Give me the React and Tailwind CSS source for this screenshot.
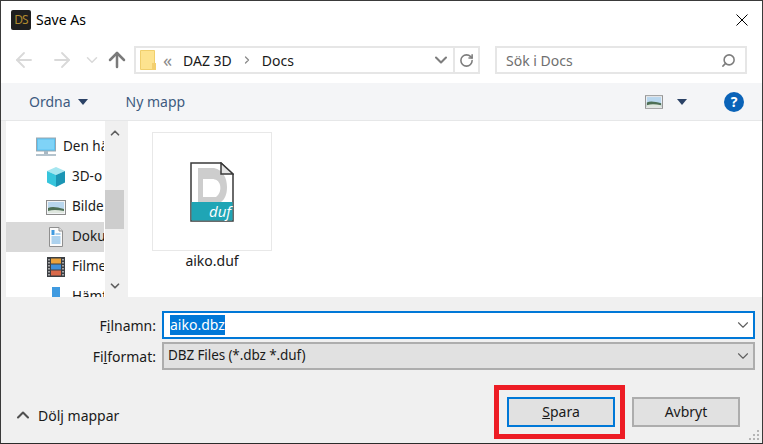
import { ChevronDown, ChevronUp, ChevronRight, ArrowLeft, ArrowRight, ArrowUp, RotateCw, Search } from 'lucide-react';

const PictureIcon = ({ className }) => (
  <svg viewBox="0 0 20 15" className={className}>
    <rect x="0.5" y="0.5" width="19" height="14" fill="#f2f4f6" stroke="#8c8c8c" />
    <rect x="2" y="2" width="16" height="11" fill="#b9d7ee" />
    <path d="M2 8 C6 6 11 7 18 9 V13 H2 Z" fill="#4d6f55" />
    <path d="M2 11 C7 9.5 12 10 18 11 V13 H2 Z" fill="#dfe7df" />
  </svg>
);

const sidebarItems = [
  { label: 'Den hä', indent: 'pl-[30px]', gap: 'gap-[7px]', icon: 'pc' },
  { label: '3D-o', indent: 'pl-[40px]', gap: 'gap-[6px]', icon: 'cube' },
  { label: 'Bilde', indent: 'pl-[40px]', gap: 'gap-[6px]', icon: 'pic' },
  { label: 'Dokument', indent: 'pl-[40px]', gap: 'gap-[6px]', icon: 'doc', active: true },
  { label: 'Filmer', indent: 'pl-[40px]', gap: 'gap-[6px]', icon: 'film' },
  { label: 'Hämtade', indent: 'pl-[40px]', gap: 'gap-[6px]', icon: 'down' },
];

const SidebarIcon = ({ type }) => {
  if (type === 'pc') {
    return (
      <svg viewBox="0 0 20 20" className="h-5 w-5 shrink-0">
        <rect x="0.5" y="1" width="19" height="13" fill="#5cc3f2" stroke="#9aa7b0" />
        <rect x="2" y="2.5" width="16" height="10" fill="#7fd3f7" />
        <rect x="8" y="14" width="4" height="3" fill="#a9b8c2" />
        <rect x="0" y="17" width="20" height="2" fill="#b4c3cd" />
      </svg>
    );
  }
  if (type === 'cube') {
    return (
      <svg viewBox="0 0 20 20" className="h-5 w-5 shrink-0">
        <path d="M10 0 L19 4 L10 8 L1 4 Z" fill="#a5e6f0" />
        <path d="M1 4 L10 8 V20 L1 15.5 Z" fill="#36c5dc" />
        <path d="M19 4 L10 8 V20 L19 15.5 Z" fill="#1b95b4" />
      </svg>
    );
  }
  if (type === 'pic') return <PictureIcon className="h-[15px] w-5 shrink-0" />;
  if (type === 'doc') {
    return (
      <svg viewBox="0 0 20 20" className="h-5 w-5 shrink-0">
        <path d="M3.5 0.5 H13 L16.5 4 V19.5 H3.5 Z" fill="#fbfbfb" stroke="#8f8f8f" />
        <path d="M13 0.5 V4 H16.5" fill="#e2e2e2" stroke="#8f8f8f" />
        <rect x="5.5" y="3" width="3" height="5" fill="#3f9ae0" />
        <path d="M9.5 7 H14.5 M5.5 10 H14.5 M5.5 12 H14.5 M5.5 14 H14.5 M5.5 16 H14.5" stroke="#5fa8e0" strokeWidth="1" />
      </svg>
    );
  }
  if (type === 'film') {
    return (
      <svg viewBox="0 0 20 20" className="h-5 w-5 shrink-0">
        <rect x="1" y="0" width="18" height="20" fill="#3c3f43" />
        <rect x="5" y="1.5" width="10" height="5" fill="#e9a13b" />
        <rect x="5" y="7.5" width="10" height="5" fill="#3f8fd8" />
        <rect x="5" y="13.5" width="10" height="5" fill="#d9694a" />
        <path d="M3 2 V19 M17 2 V19" stroke="#c9c9c9" strokeWidth="1.5" strokeDasharray="1.5 1.5" />
      </svg>
    );
  }
  return (
    <svg viewBox="0 0 20 20" className="h-5 w-5 shrink-0">
      <rect x="6" y="0" width="8" height="12" fill="#3f9ae0" />
      <path d="M3 11 H17 L10 19 Z" fill="#3f9ae0" />
    </svg>
  );
};

const FileIcon = () => (
  <svg viewBox="0 0 44 60" className="h-[60px] w-[44px]">
    <path d="M1 1 H31 L43 12 V59 H1 Z" fill="#ffffff" stroke="#3a3a3a" strokeWidth="1.5" />
    <path fillRule="evenodd" d="M8 6 H24 C33 8 37 16 37 25 C37 32 35 37 31 40 H13 V35 H26 C30 32 31 27 30 23 C29 19 26 17 22 17 H13 V40 H8 Z" fill="#cdcdcd" />
    <path d="M31 1 V12 H43 Z" fill="#e4e4e4" stroke="#3a3a3a" strokeWidth="1.5" />
    <rect x="1.5" y="40" width="41" height="18.5" fill="#1fa5b5" />
    <text x="41" y="55" textAnchor="end" fontFamily="'Open Sans', sans-serif" fontStyle="italic" fontSize="15" fill="#ffffff">duf</text>
  </svg>
);

const ResizeGrip = () => (
  <svg viewBox="0 0 12 12" className="absolute bottom-[2px] right-[2px] h-3 w-3">
    <path d="M9 1 h2 v2 h-2 Z M5 5 h2 v2 h-2 Z M9 5 h2 v2 h-2 Z M1 9 h2 v2 h-2 Z M5 9 h2 v2 h-2 Z M9 9 h2 v2 h-2 Z" fill="#b5b5b5" />
  </svg>
);

const App = () => {
  return (
    <div className="relative flex h-[444px] w-[763px] flex-col overflow-hidden border border-[#3a3a3a] border-b-[#2b2b2b] bg-white font-['Noto_Sans','Open_Sans',sans-serif] text-[14px] leading-none text-[#1a1a1a]">
      {/* title bar */}
      <div className="flex h-[37px] shrink-0 items-center pl-[10px] pr-[14px]">
        <div className="flex h-5 w-5 items-center justify-center rounded-[2px] bg-[#1f1f1f] text-[12px] tracking-[-1px] text-[#b08a2e]">DS</div>
        <span className="ml-[5px] text-[14px] text-black">Save As</span>
        <svg viewBox="0 0 12 12" className="ml-auto h-3 w-3">
          <path d="M0.5 0.5 L11.5 11.5 M11.5 0.5 L0.5 11.5" stroke="#000000" strokeWidth="1" fill="none" />
        </svg>
      </div>

      {/* address row */}
      <div className="flex h-[45px] shrink-0 items-start pt-[8px]">
        <div className="flex h-[28px] w-[133px] shrink-0 items-center pl-[11px]">
          <ArrowLeft className="h-6 w-6 text-[#d9d9d9]" strokeWidth={1.8} />
          <ArrowRight className="ml-[14px] h-6 w-6 text-[#d9d9d9]" strokeWidth={1.8} />
          <ChevronDown className="ml-[9px] h-[18px] w-[18px] text-[#d9d9d9]" strokeWidth={2} />
          <ArrowUp className="ml-[4px] h-6 w-6 text-[#7a7a7a]" strokeWidth={2.5} />
        </div>
        <div className="flex h-[28px] w-[346px] shrink-0 items-center border-2 border-[#e6e6e6]">
          <svg viewBox="0 0 16 20" className="ml-[4px] h-[20px] w-4 shrink-0">
            <path d="M0.5 0.5 H14.5 V19.5 H0.5 Z" fill="#fde38f" stroke="#f0cf6c" />
            <rect x="12" y="13" width="4" height="7" fill="#f3cf6e" />
          </svg>
          <span className="ml-[6px] w-[11px] text-center text-[18px] text-[#8a8a8a]">«</span>
          <span className="ml-[10px] pt-[1px]">DAZ 3D</span>
          <ChevronRight className="ml-[9px] h-3 w-3 text-[#8a8a8a]" strokeWidth={2.5} />
          <span className="ml-[9px] pt-[1px]">Docs</span>
          <ChevronDown className="ml-auto mr-[2px] h-5 w-5 text-[#7d7d7d]" strokeWidth={2.5} />
          <div className="flex h-full w-[25px] items-center justify-center border-l-2 border-[#e6e6e6]">
            <RotateCw className="h-[15px] w-[15px] text-[#7d7d7d]" strokeWidth={2.5} />
          </div>
        </div>
        <div className="ml-[15px] flex h-[28px] w-[252px] shrink-0 items-center justify-between border-2 border-[#e6e6e6] pl-[9px] pr-[9px] text-[#6f6f6f]">
          <span className="pt-[1px]">Sök i Docs</span>
          <Search className="h-[15px] w-[15px] -scale-x-100 text-[#7d7d7d]" strokeWidth={2.5} />
        </div>
      </div>

      {/* toolbar */}
      <div className="flex h-[38px] shrink-0 items-center border-b border-[#e6e7e8] bg-[#f4f5f7] pl-[28px] pr-[18px] text-[#3d5a80]">
        <span>Ordna</span>
        <svg viewBox="0 0 10 6" className="ml-[7px] h-[6px] w-[10px]"><path d="M0 0 H10 L5 6 Z" fill="#2b4266" /></svg>
        <span className="ml-[38px]">Ny mapp</span>
        <PictureIcon className="ml-auto h-[14px] w-[18px]" />
        <svg viewBox="0 0 10 6" className="ml-[14px] h-[6px] w-[10px]"><path d="M0 0 H10 L5 6 Z" fill="#2b4266" /></svg>
        <div className="ml-[37px] flex h-5 w-5 items-center justify-center rounded-full bg-[#0a63b8] text-[14px] font-bold text-white">?</div>
      </div>

      {/* main area */}
      <div className="flex h-[176px] shrink-0 bg-[#f0f0f0] pl-[5px]">
        <div className="h-full w-[99px] shrink-0 overflow-hidden bg-white pt-[11px]">
          {sidebarItems.map((item) => (
            <div
              key={item.label}
              className={`flex h-[30px] w-[98px] items-center overflow-hidden whitespace-nowrap ${item.indent} ${item.gap} ${item.active ? 'bg-[#d9d9d9]' : ''}`}
            >
              <SidebarIcon type={item.icon} />
              <span className="text-[13.5px]">{item.label}</span>
            </div>
          ))}
        </div>
        <div className="flex h-full w-[19px] shrink-0 flex-col items-center bg-[#f0f0f0] pt-[5px]">
          <ChevronUp className="h-[14px] w-[14px] text-[#606060]" strokeWidth={3} />
          <div className="mt-[50px] h-[39px] w-full bg-[#cdcdcd]" />
          <ChevronDown className="mt-[50px] h-[14px] w-[14px] text-[#606060]" strokeWidth={3} />
        </div>
        <div className="ml-[4px] h-full flex-1 bg-white pl-[24px] pt-[11px]">
          <div className="flex w-[120px] flex-col items-center">
            <div className="flex h-[119px] w-[120px] items-center justify-center border border-[#e8e8e8]">
              <FileIcon />
            </div>
            <span className="mt-[3px]">aiko.duf</span>
          </div>
        </div>
      </div>

      {/* bottom panel */}
      <div className="flex flex-1 flex-col bg-[#f0f0f0] pl-[5px] pr-[7px] pt-[14px]">
        <div className="flex h-[28px] items-center">
          <span className="w-[150px] pt-[1px] text-right">F<span className="underline">i</span>lnamn:</span>
          <div className="ml-[6px] flex h-[28px] flex-1 items-center border-2 border-[#0078d7] bg-white pl-[6px] pr-[1px]">
            <span className="bg-[#0078d7] py-[3px] text-white">aiko.dbz</span>
            <ChevronDown className="ml-auto h-[18px] w-[18px] text-[#606060]" strokeWidth={1.5} />
          </div>
        </div>
        <div className="mt-[3px] flex h-[28px] items-center">
          <span className="w-[150px] pt-[1px] text-right">Fi<span className="underline">l</span>format:</span>
          <div className="ml-[6px] flex h-[28px] flex-1 items-center border-2 border-[#adadad] bg-[#e1e1e1] pl-[4px] pr-[1px] text-[13.5px] tracking-[-0.1px]">
            <span>DBZ Files (*.dbz *.duf)</span>
            <ChevronDown className="ml-auto h-[18px] w-[18px] text-[#606060]" strokeWidth={1.5} />
          </div>
        </div>
        <div className="mt-[27px] flex items-start">
          <div className="mt-[8px] flex items-center pl-[7px]">
            <ChevronUp className="h-5 w-5 text-[#505050]" strokeWidth={2.5} />
            <span className="ml-[5px] pt-[1px]">Dölj mappar</span>
          </div>
          <div className="ml-auto flex gap-[17px] pr-[15px]">
            <button className="h-[30px] w-[108px] border-2 border-[#0078d7] bg-[#e1e1e1]"><span className="underline">S</span>para</button>
            <button className="h-[30px] w-[108px] border-2 border-[#adadad] bg-[#e1e1e1]">Avbryt</button>
          </div>
        </div>
      </div>

      <ResizeGrip />

      {/* red annotation */}
      <div className="absolute left-[493px] top-[384px] h-[54px] w-[131px] border-[5px] border-[#ed1c24]" />
    </div>
  );
};

export default App;
